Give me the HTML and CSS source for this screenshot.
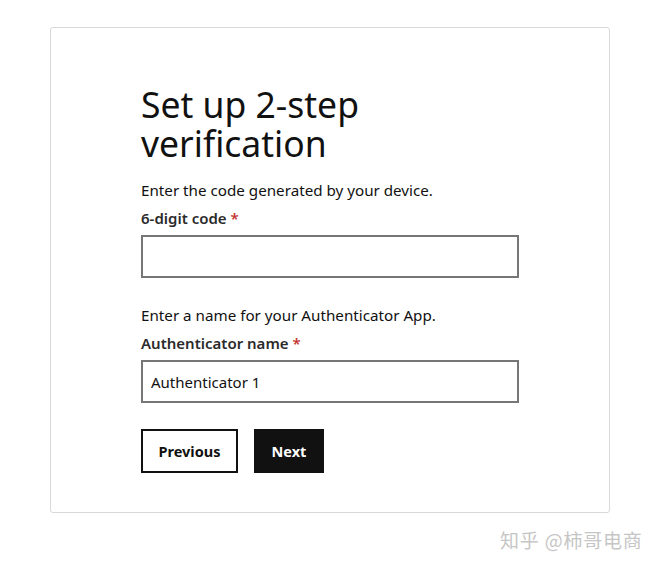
FILE: index.html
```html
<!DOCTYPE html>
<html lang="en">
<head>
<meta charset="utf-8">
<title>Set up 2-step verification</title>
<link rel="stylesheet" href="styles.css">
</head>
<body>
<main class="card">
  <h1 class="title"><span class="title-line">Set up 2-step</span><span class="title-line">verification</span></h1>
  <p class="hint">Enter the code generated by your device.</p>
  <label class="label" for="code">6-digit code <span class="req">*</span></label>
  <input class="field" id="code" type="text" value="">
  <p class="hint hint-second">Enter a name for your Authenticator App.</p>
  <label class="label" for="name">Authenticator name <span class="req">*</span></label>
  <input class="field" id="name" type="text" value="Authenticator 1">
  <div class="actions">
    <button class="btn btn-outline" type="button">Previous</button>
    <button class="btn btn-solid" type="button">Next</button>
  </div>
</main>
<div class="watermark">知乎 @柿哥电商</div>
</body>
</html>
```

FILE: styles.css
```css
html, body {
  margin: 0;
  padding: 0;
  background: #fff;
}
body {
  font-family: "Noto Sans", "Liberation Sans", sans-serif;
  color: #111;
  width: 659px;
  height: 568px;
  position: relative;
  overflow: hidden;
}
.card {
  box-sizing: border-box;
  margin: 27px 0 0 50px;
  width: 560px;
  height: 486px;
  border: 1px solid #d8d8d8;
  border-radius: 3px;
  padding: 57px 0 0 90px;
  display: flex;
  flex-direction: column;
  align-items: flex-start;
}
.title {
  margin: 0;
  font-size: 35.5px;
  font-weight: 400;
  color: #111;
  display: flex;
  flex-direction: column;
}
.title-line {
  display: block;
  height: 39px;
  line-height: 39px;
}
.hint {
  margin: 16px 0 0;
  font-size: 15.2px;
  line-height: 22px;
}
.hint-second {
  margin-top: 26px;
}
.label {
  margin-top: 7px;
  font-size: 15px;
  font-weight: 600;
  line-height: 20px;
  color: #2b2b2b;
}
.req {
  color: #c3352f;
}
.field {
  box-sizing: border-box;
  margin-top: 7px;
  width: 378px;
  height: 43px;
  border: 2px solid #767676;
  border-radius: 0;
  padding: 0 8px;
  font-family: inherit;
  font-size: 15px;
  color: #111;
  background: #fff;
  outline: none;
}
.actions {
  margin-top: 26px;
  display: flex;
  gap: 16px;
}
.btn {
  box-sizing: border-box;
  height: 44px;
  font-family: inherit;
  font-size: 14.5px;
  font-weight: 700;
  border: 2px solid #111;
  border-radius: 0;
  padding: 0 12px;
  cursor: pointer;
}
.btn-outline {
  width: 97px;
  background: #fff;
  color: #111;
}
.btn-solid {
  width: 70px;
  background: #111;
  color: #fff;
}
.watermark {
  position: absolute;
  left: 500px;
  top: 527px;
  font-family: "Noto Sans CJK SC", sans-serif;
  font-size: 19px;
  line-height: 26px;
  color: #c6c6c6;
  letter-spacing: 0.8px;
}
```
